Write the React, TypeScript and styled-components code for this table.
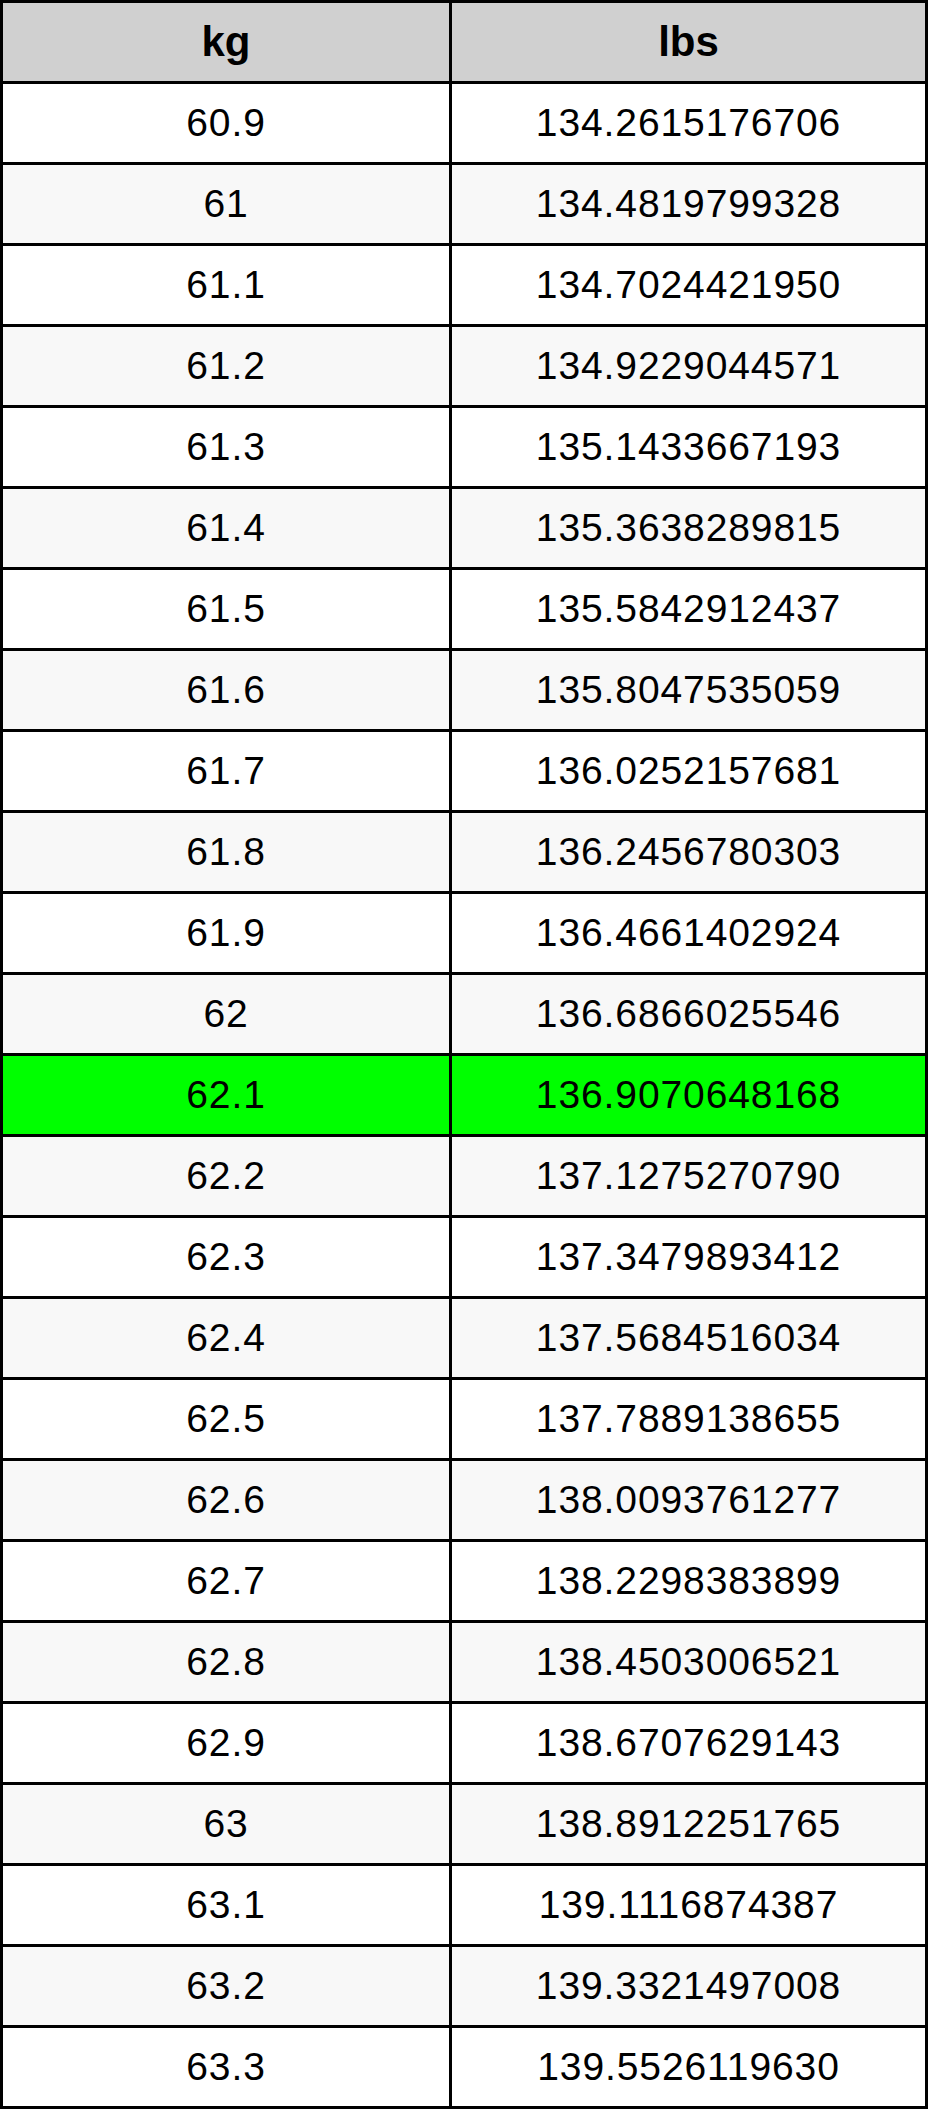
import React from 'react'
import styled, {createGlobalStyle} from 'styled-components'

const GlobalStyle = createGlobalStyle`
    html, body {
        margin: 0;
        padding: 0;
        background: #ffffff;
    }
`;

const rows: [string, string][] = [
    ['60.9', '134.2615176706'],
    ['61', '134.4819799328'],
    ['61.1', '134.7024421950'],
    ['61.2', '134.9229044571'],
    ['61.3', '135.1433667193'],
    ['61.4', '135.3638289815'],
    ['61.5', '135.5842912437'],
    ['61.6', '135.8047535059'],
    ['61.7', '136.0252157681'],
    ['61.8', '136.2456780303'],
    ['61.9', '136.4661402924'],
    ['62', '136.6866025546'],
    ['62.1', '136.9070648168'],
    ['62.2', '137.1275270790'],
    ['62.3', '137.3479893412'],
    ['62.4', '137.5684516034'],
    ['62.5', '137.7889138655'],
    ['62.6', '138.0093761277'],
    ['62.7', '138.2298383899'],
    ['62.8', '138.4503006521'],
    ['62.9', '138.6707629143'],
    ['63', '138.8912251765'],
    ['63.1', '139.1116874387'],
    ['63.2', '139.3321497008'],
    ['63.3', '139.5526119630'],
]

const HIGHLIGHT = '62.1'

const Table = styled.table`
    border-collapse: collapse;
    table-layout: fixed;
    width: 925px;
    font-family: "Liberation Sans", Arial, sans-serif;
    color: #000;
`;

const HeadCell = styled.th`
    height: 78px;
    padding: 0;
    border: 3px solid #000;
    background: #d0d0d0;
    font-size: 42px;
    font-weight: bold;
    text-align: center;
    vertical-align: middle;
`;

const Row = styled.tr<{$even: boolean; $active: boolean}>`
    background: ${p => p.$active ? '#00ff00' : p.$even ? '#f8f8f8' : '#ffffff'};
`;

const Cell = styled.td`
    height: 78px;
    padding: 0;
    border: 3px solid #000;
    font-size: 39px;
    letter-spacing: 0.9px;
    text-align: center;
    vertical-align: middle;
`;

export default function App() {
    return (
        <>
            <GlobalStyle/>
            <Table>
                <colgroup>
                    <col style={{width: 449}}/>
                    <col style={{width: 476}}/>
                </colgroup>
                <thead>
                    <tr>
                        <HeadCell>kg</HeadCell>
                        <HeadCell>lbs</HeadCell>
                    </tr>
                </thead>
                <tbody>
                    {rows.map(([kg, lbs], i) => (
                        <Row key={kg} $even={i % 2 === 1} $active={kg === HIGHLIGHT}>
                            <Cell>{kg}</Cell>
                            <Cell>{lbs}</Cell>
                        </Row>
                    ))}
                </tbody>
            </Table>
        </>
    )
}
